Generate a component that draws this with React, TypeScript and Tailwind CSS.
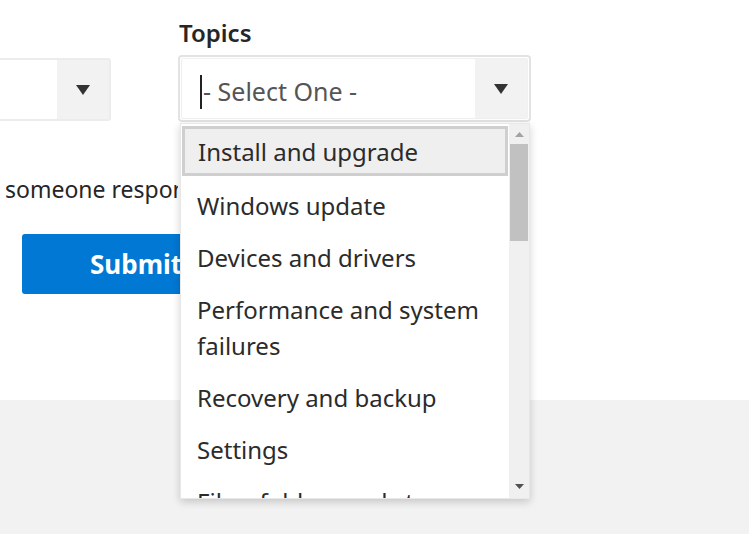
import { useState } from "react";

const topics = [
  "Install and upgrade",
  "Windows update",
  "Devices and drivers",
  "Performance and system failures",
  "Recovery and backup",
  "Settings",
  "Files, folders and storage",
];

function Caret() {
  return (
    <svg width="14" height="10" viewBox="0 0 14 10" className="fill-[#333]">
      <path d="M0 0h14L7 10z" />
    </svg>
  );
}

export default function App() {
  const [active] = useState(0);

  return (
    <div className="h-[534px] w-[749px] overflow-hidden bg-[#f2f2f2] font-['Noto_Sans',sans-serif] text-[#262626]">
      <div className="h-[400px] bg-white">
        <div className="flex items-end gap-[67px] pt-[17px]">
          {/* left select, cut off at the edge */}
          <div className="-ml-[200px] mb-[1px] flex h-[63px] w-[311px] rounded-[3px] border-2 border-[#ececec] bg-white">
            <div className="flex-1" />
            <div className="flex w-[52px] items-center justify-center bg-[#f2f2f2]">
              <Caret />
            </div>
          </div>

          <div className="w-[353px]">
            <div className="mb-[6px] pl-[1px] text-[24px] font-semibold leading-[32px] text-[#262626]">
              Topics
            </div>
            <div className="relative">
              <div className="rounded-[4px] border-2 border-[#e3e3e3] p-[1px]">
                <div className="flex h-[61px] rounded-[2px] border border-[#f0f0f0] bg-white">
                  <div className="flex flex-1 items-center pl-[18px] pt-[6px] text-[25px] text-[#555]">
                    <span className="mr-[1px] inline-block h-[34px] w-[2px] bg-[#222]" />
                    <span>- Select One -</span>
                  </div>
                  <div className="flex w-[52px] items-center justify-center bg-[#f2f2f2]">
                    <Caret />
                  </div>
                </div>
              </div>

              {/* open list */}
              <div className="absolute left-[2px] top-full z-10 mt-[1px] flex h-[376px] w-[350px] overflow-hidden border border-[#e8e8e8] bg-white shadow-[0_3px_8px_rgba(0,0,0,0.18)]">
                <ul className="flex-1 overflow-hidden">
                  {topics.map((t, i) => (
                    <li
                      key={t}
                      className={
                        i === active
                          ? "mx-[1px] mb-[4px] mt-[2px] border-[3px] border-[#cfcfcf] bg-[#efefef] pb-[4px] pl-[13px] pr-[10px] pt-[5px] text-[24px] leading-[35px] text-[#2b2b2b]"
                          : "py-[8px] pl-[16px] pr-[26px] text-[24px] leading-[36px] text-[#2b2b2b]"
                      }
                    >
                      {t}
                    </li>
                  ))}
                </ul>
                <div className="flex w-[20px] flex-col bg-[#f0f0f0]">
                  <div className="flex h-[20px] items-center justify-center">
                    <svg width="9" height="5" viewBox="0 0 9 5" className="fill-[#a3a3a3]">
                      <path d="M0 5h9L4.5 0z" />
                    </svg>
                  </div>
                  <div className="mx-[1px] h-[97px] bg-[#c1c1c1]" />
                  <div className="flex-1" />
                  <div className="flex h-[24px] items-center justify-center">
                    <svg width="9" height="5" viewBox="0 0 9 5" className="fill-[#505050]">
                      <path d="M0 0h9L4.5 5z" />
                    </svg>
                  </div>
                </div>
              </div>
            </div>
          </div>
        </div>

        <p className="mt-[52px] w-[178px] overflow-hidden whitespace-nowrap pl-[5px] text-[23px] leading-[30px]">
          someone responds to your question
        </p>

        <button className="ml-[22px] mt-[30px] h-[60px] w-[290px] rounded-[3px] bg-[#0078d4] pl-[68px] text-left text-[26px] font-bold text-white">
          Submit
        </button>
      </div>
    </div>
  );
}
